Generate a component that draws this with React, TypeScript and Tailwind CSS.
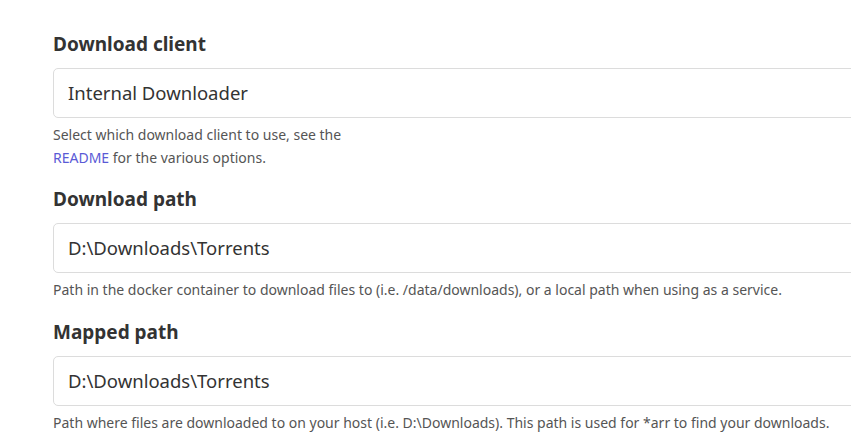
import React from 'react';

interface FieldProps {
  label: string;
  value: string;
  children: React.ReactNode;
}

const Field: React.FC<FieldProps> = ({ label, value, children }) => (
  <div className="mb-[17px]">
    <label className="block text-[19px] font-bold leading-[26px] text-[#333]">{label}</label>
    <div className="mt-[11px] h-[50px] w-[860px] flex items-center rounded-[5px] border border-[#dcdcdc] bg-white px-[14px] text-[18.5px] text-[#333]">
      {value}
    </div>
    <div className="mt-[6px] text-[14px] leading-[22.5px] text-[#555]">{children}</div>
  </div>
);

export default function App() {
  return (
    <div
      className="w-[851px] h-[443px] overflow-hidden bg-white pl-[53px] pt-[31px]"
      style={{ fontFamily: '"Noto Sans", "Open Sans", sans-serif' }}
    >
      <Field label="Download client" value="Internal Downloader">
        Select which download client to use, see the
        <br />
        <a className="text-[#5a5ad6]">README</a> for the various options.
      </Field>
      <Field label="Download path" value="D:\Downloads\Torrents">
        Path in the docker container to download files to (i.e. /data/downloads), or a local path when using as a service.
      </Field>
      <Field label="Mapped path" value="D:\Downloads\Torrents">
        Path where files are downloaded to on your host (i.e. D:\Downloads). This path is used for *arr to find your downloads.
      </Field>
    </div>
  );
}
